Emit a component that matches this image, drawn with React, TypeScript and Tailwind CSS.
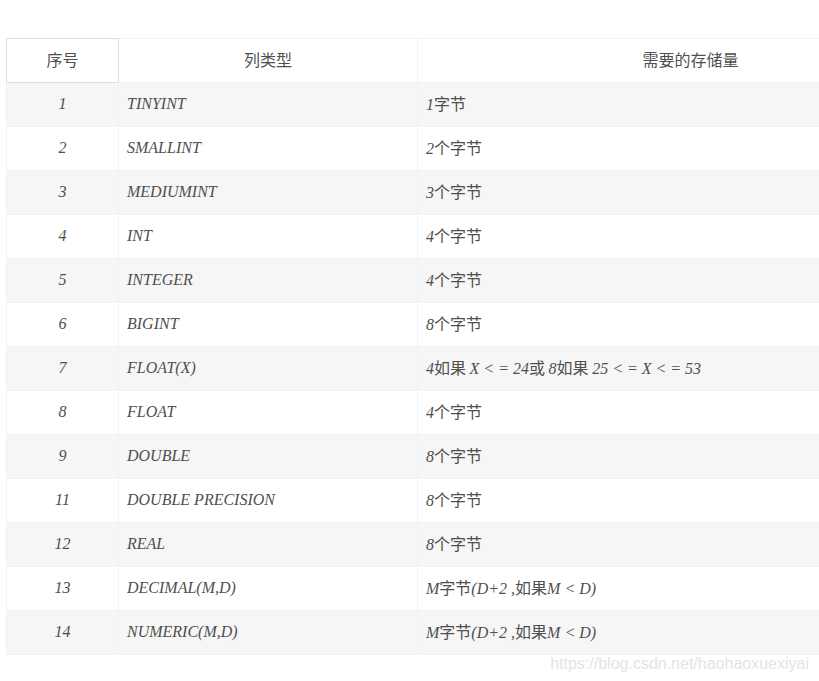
const rows: [string, string, React.ReactNode][] = [
  ["1", "TINYINT", <><i>1</i>字节</>],
  ["2", "SMALLINT", <><i>2</i>个字节</>],
  ["3", "MEDIUMINT", <><i>3</i>个字节</>],
  ["4", "INT", <><i>4</i>个字节</>],
  ["5", "INTEGER", <><i>4</i>个字节</>],
  ["6", "BIGINT", <><i>8</i>个字节</>],
  ["7", "FLOAT(X)", <><i>4</i>如果 <i>X &lt; = 24</i>或 <i>8</i>如果 <i>25 &lt; = X &lt; = 53</i></>],
  ["8", "FLOAT", <><i>4</i>个字节</>],
  ["9", "DOUBLE", <><i>8</i>个字节</>],
  ["11", "DOUBLE PRECISION", <><i>8</i>个字节</>],
  ["12", "REAL", <><i>8</i>个字节</>],
  ["13", "DECIMAL(M,D)", <><i>M</i>字节<i>(D+2 ,</i>如果<i>M &lt; D)</i></>],
  ["14", "NUMERIC(M,D)", <><i>M</i>字节<i>(D+2 ,</i>如果<i>M &lt; D)</i></>],
];

export default function App() {
  return (
    <div className="relative w-[819px] h-[681px] overflow-hidden bg-white pt-[38px] pl-[6px]">
      <table className="border-collapse w-[957px] table-fixed text-[16px] text-[#4f4f4f]">
        <colgroup>
          <col className="w-[112px]" />
          <col className="w-[299px]" />
          <col className="w-[546px]" />
        </colgroup>
        <thead>
          <tr className="h-[44px] bg-white">
            <th className="border border-[#dddddd] pb-[3px] font-normal text-center text-[#4f4f4f] font-['Noto_Sans_CJK_SC',sans-serif] text-[16px]">序号</th>
            <th className="border border-[#eef3f7] pb-[3px] font-normal text-center text-[#4f4f4f] font-['Noto_Sans_CJK_SC',sans-serif] text-[16px]">列类型</th>
            <th className="border border-[#eef3f7] pb-[3px] font-normal text-center text-[#4f4f4f] font-['Noto_Sans_CJK_SC',sans-serif] text-[16px]">需要的存储量</th>
          </tr>
        </thead>
        <tbody>
          {rows.map(([n, t, s], i) => (
            <tr key={n} className={`h-[44px] ${i % 2 === 0 ? "bg-[#f6f6f6]" : "bg-white"}`}>
              <td className="border border-[#eef3f7] pb-[2px] text-center italic font-['Liberation_Serif',serif]">{n}</td>
              <td className="border border-[#eef3f7] pb-[2px] pl-[8px] italic font-['Liberation_Serif',serif]">{t}</td>
              <td className="border border-[#eef3f7] pb-[2px] pl-[8px] font-['Noto_Sans_CJK_SC',sans-serif] [&_i]:font-['Liberation_Serif',serif] [&_i]:italic">{s}</td>
            </tr>
          ))}
        </tbody>
      </table>
      <div className="absolute right-[10px] top-[652px] text-[16px] text-[#e4e4e4] font-['Liberation_Sans',sans-serif]">
        https://blog.csdn.net/haohaoxuexiyai
      </div>
    </div>
  );
}
